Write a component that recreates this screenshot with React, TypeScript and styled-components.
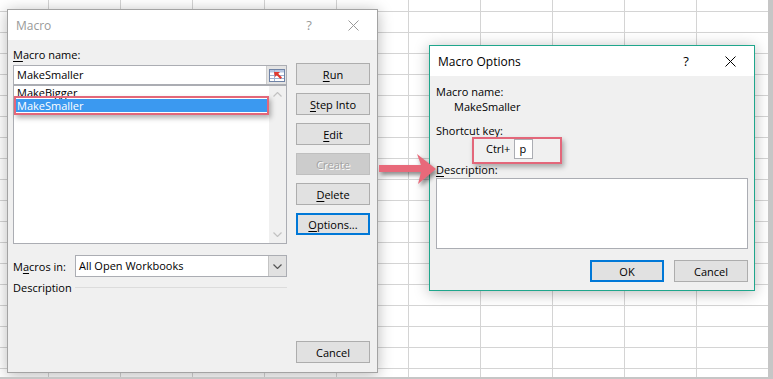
import React from 'react';
import styled, { createGlobalStyle, css } from 'styled-components';

const GlobalStyle = createGlobalStyle`
  html, body {
    margin: 0;
    padding: 0;
    background: #fff;
  }
  body {
    font-family: 'Open Sans', 'Liberation Sans', sans-serif;
    font-size: 11px;
    color: #000;
  }
`;

const Sheet = styled.div`
  position: relative;
  width: 773px;
  height: 379px;
  box-sizing: border-box;
  overflow: hidden;
  border-right: 5px solid #c6c6c6;
  border-bottom: 2px solid #c6c6c6;
  background-color: #fff;
  background-image: linear-gradient(to right, #d4d4d4 1px, transparent 1px),
    linear-gradient(to bottom, #d4d4d4 1px, transparent 1px);
  background-size: 72px 100%, 100% 21px;
  background-position: 48px 0, 0 11px;
`;

const Window = styled.div<{
  $left: number;
  $top: number;
  $width: number;
  $height: number;
  $accent: string;
}>`
  position: absolute;
  left: ${(p) => p.$left}px;
  top: ${(p) => p.$top}px;
  width: ${(p) => p.$width}px;
  height: ${(p) => p.$height}px;
  box-sizing: border-box;
  border: 1px solid ${(p) => p.$accent};
  background: #f0f0f0;
  box-shadow: 0 2px 14px rgba(0, 0, 0, 0.28);
  display: flex;
  flex-direction: column;
`;

const TitleBar = styled.div<{ $active: boolean }>`
  height: 30px;
  flex: none;
  background: #fff;
  display: flex;
  align-items: center;
  padding: 0 16px 0 8px;
  color: ${(p) => (p.$active ? '#000' : '#999')};
`;

const TitleText = styled.span`
  flex: 1;
  font-size: 12px;
`;

const HelpGlyph = styled.span`
  width: 14px;
  margin-right: 29px;
  text-align: center;
  font-size: 13px;
`;

const CloseBox = styled.span`
  width: 16px;
  display: flex;
  justify-content: center;
`;

const U = styled.span`
  text-decoration: underline;
  text-underline-offset: 2px;
`;

const Label = styled.div<{ $indent?: number; $gap?: number }>`
  line-height: 15px;
  white-space: nowrap;
  margin-left: ${(p) => p.$indent ?? 0}px;
  margin-top: ${(p) => p.$gap ?? 0}px;
`;

/* left dialog */

const MacroBody = styled.div`
  flex: 1;
  display: flex;
  gap: 9px;
  padding: 7px 7px 9px 5px;
`;

const LeftColumn = styled.div`
  width: 274px;
  display: flex;
  flex-direction: column;
`;

const ButtonColumn = styled.div`
  width: 74px;
  display: flex;
  flex-direction: column;
  gap: 8px;
  padding-top: 16px;
`;

const NameInput = styled.div`
  margin-top: 3px;
  height: 20px;
  box-sizing: border-box;
  border: 1px solid #abadb3;
  background: #fff;
  display: flex;
`;

const InputText = styled.span`
  flex: 1;
  padding-left: 3px;
  line-height: 18px;
`;

const RefButton = styled.span`
  width: 19px;
  background: #e3e3e3;
  border-left: 1px solid #cdcdcd;
  display: flex;
  align-items: center;
  justify-content: center;
`;

const ListBox = styled.div`
  height: 159px;
  box-sizing: border-box;
  border: 1px solid #abadb3;
  background: #fff;
  display: flex;
`;

const ListItems = styled.div`
  flex: 1;
  padding: 0 1px;
`;

const ListRow = styled.div<{ $selected?: boolean }>`
  position: relative;
  height: 13px;
  line-height: 13px;
  padding-left: 2px;
  ${(p) =>
    p.$selected &&
    css`
      background: #3b99f0;
      color: #fff;
      &::after {
        content: '';
        position: absolute;
        top: -3px;
        bottom: -3px;
        left: -1px;
        right: -1px;
        border: 2px solid #e3677a;
        box-shadow: 2px 3px 5px rgba(0, 0, 0, 0.3);
      }
    `}
`;

const ScrollBar = styled.div`
  width: 17px;
  background: #f0f0f0;
  display: flex;
  flex-direction: column;
  justify-content: space-between;
`;

const ScrollArrow = styled.span`
  height: 17px;
  display: flex;
  align-items: center;
  justify-content: center;
`;

const MacrosInRow = styled.div`
  margin-top: 11px;
  height: 22px;
  display: flex;
  align-items: center;
`;

const MacrosInLabel = styled.span`
  width: 62px;
`;

const Select = styled.div`
  flex: 1;
  height: 22px;
  box-sizing: border-box;
  border: 1px solid #abadb3;
  background: #fff;
  display: flex;
`;

const SelectText = styled.span`
  flex: 1;
  padding-left: 3px;
  line-height: 20px;
`;

const DropButton = styled.span`
  width: 17px;
  background: #e1e1e1;
  border-left: 1px solid #c4c4c4;
  display: flex;
  align-items: center;
  justify-content: center;
`;

const DescriptionRow = styled.div`
  margin-top: 3px;
  display: flex;
  align-items: center;
  gap: 3px;
  line-height: 15px;
`;

const Rule = styled.span`
  flex: 1;
  height: 1px;
  background: #dcdcdc;
`;

const DialogButton = styled.div<{ $default?: boolean; $disabled?: boolean }>`
  width: 74px;
  height: 22px;
  flex: none;
  box-sizing: border-box;
  border: 1px solid #adadad;
  background: #e1e1e1;
  display: flex;
  align-items: center;
  justify-content: center;
  ${(p) =>
    p.$default &&
    css`
      border: 2px solid #0078d7;
    `}
  ${(p) =>
    p.$disabled &&
    css`
      background: #cccccc;
      border-color: #bfbfbf;
      color: #a3a3a3;
      text-shadow: 1px 1px 0 #fff;
    `}
`;

const BottomButton = styled(DialogButton)`
  margin-top: auto;
`;

/* right dialog */

const OptionsBody = styled.div`
  flex: 1;
  display: flex;
  flex-direction: column;
  padding: 8px 6px 8px 6px;
`;

const ShortcutBox = styled.div`
  align-self: flex-start;
  margin: -1px 0 0 36px;
  width: 90px;
  height: 27px;
  box-sizing: border-box;
  border: 2px solid #e3677a;
  box-shadow: 2px 3px 5px rgba(0, 0, 0, 0.3);
  display: flex;
  align-items: flex-start;
  gap: 4px;
  padding-left: 12px;
`;

const CtrlText = styled.span`
  line-height: 20px;
`;

const KeyInput = styled.span`
  width: 19px;
  height: 20px;
  box-sizing: border-box;
  border: 1px solid #abadb3;
  background: #fff;
  padding-left: 4px;
  line-height: 17px;
`;

const TextArea = styled.div`
  margin-top: 1px;
  height: 71px;
  box-sizing: border-box;
  border: 1px solid #abadb3;
  background: #fff;
`;

const ButtonRow = styled.div`
  margin-top: 11px;
  display: flex;
  justify-content: flex-end;
  gap: 10px;
`;

const Arrow = styled.svg`
  position: absolute;
  left: 370px;
  top: 148px;
  filter: drop-shadow(2px 3px 2px rgba(0, 0, 0, 0.45));
`;

const CloseIcon = () => (
  <svg width="11" height="11" viewBox="0 0 11 11">
    <path d="M0.5 0.5 L10.5 10.5 M10.5 0.5 L0.5 10.5" stroke="currentColor" strokeWidth="1" />
  </svg>
);

const RefEditIcon = () => (
  <svg width="16" height="13" viewBox="0 0 16 13">
    <rect x="0.5" y="0.5" width="15" height="12" fill="#fff" stroke="#6f83a6" />
    <rect x="1" y="1" width="14" height="2.5" fill="#b9c8e2" />
    <path d="M1 6.5 H15 M1 9.5 H15 M5.5 1 V12" stroke="#9fb0cf" strokeWidth="1" />
    <path d="M5 3 L11 3 L9.3 4.7 L13 8.4 L11.4 10 L7.7 6.3 L6 8 Z" fill="#e23a2e" />
  </svg>
);

const Chevron = ({ up, color }: { up?: boolean; color: string }) => (
  <svg width="9" height="5" viewBox="0 0 9 5">
    <path
      d={up ? 'M0.5 4.5 L4.5 0.5 L8.5 4.5' : 'M0.5 0.5 L4.5 4.5 L8.5 0.5'}
      stroke={color}
      strokeWidth="1.2"
      fill="none"
    />
  </svg>
);

const App: React.FC = () => {
  return (
    <>
      <GlobalStyle />
      <Sheet>
        <Window $left={7} $top={9} $width={371} $height={364} $accent="#a3a3a3">
          <TitleBar $active={false}>
            <TitleText>Macro</TitleText>
            <HelpGlyph>?</HelpGlyph>
            <CloseBox>
              <CloseIcon />
            </CloseBox>
          </TitleBar>
          <MacroBody>
            <LeftColumn>
              <Label>
                <U>M</U>acro name:
              </Label>
              <NameInput>
                <InputText>MakeSmaller</InputText>
                <RefButton>
                  <RefEditIcon />
                </RefButton>
              </NameInput>
              <ListBox>
                <ListItems>
                  <ListRow>MakeBigger</ListRow>
                  <ListRow $selected>MakeSmaller</ListRow>
                </ListItems>
                <ScrollBar>
                  <ScrollArrow>
                    <Chevron up color="#c2c2c2" />
                  </ScrollArrow>
                  <ScrollArrow>
                    <Chevron color="#c2c2c2" />
                  </ScrollArrow>
                </ScrollBar>
              </ListBox>
              <MacrosInRow>
                <MacrosInLabel>
                  M<U>a</U>cros in:
                </MacrosInLabel>
                <Select>
                  <SelectText>All Open Workbooks</SelectText>
                  <DropButton>
                    <Chevron color="#555" />
                  </DropButton>
                </Select>
              </MacrosInRow>
              <DescriptionRow>
                <span>Description</span>
                <Rule />
              </DescriptionRow>
            </LeftColumn>
            <ButtonColumn>
              <DialogButton>
                <U>R</U>un
              </DialogButton>
              <DialogButton>
                <U>S</U>tep Into
              </DialogButton>
              <DialogButton>
                <U>E</U>dit
              </DialogButton>
              <DialogButton $disabled>Create</DialogButton>
              <DialogButton>
                <U>D</U>elete
              </DialogButton>
              <DialogButton $default>
                <U>O</U>ptions...
              </DialogButton>
              <BottomButton>Cancel</BottomButton>
            </ButtonColumn>
          </MacroBody>
        </Window>

        <Window $left={429} $top={45} $width={326} $height={246} $accent="#1fa68c">
          <TitleBar $active>
            <TitleText>Macro Options</TitleText>
            <HelpGlyph>?</HelpGlyph>
            <CloseBox>
              <CloseIcon />
            </CloseBox>
          </TitleBar>
          <OptionsBody>
            <Label>Macro name:</Label>
            <Label $indent={18}>MakeSmaller</Label>
            <Label $gap={9}>
              Shortcut <U>k</U>ey:
            </Label>
            <ShortcutBox>
              <CtrlText>Ctrl+</CtrlText>
              <KeyInput>p</KeyInput>
            </ShortcutBox>
            <Label $gap={-2}>
              <U>D</U>escription:
            </Label>
            <TextArea />
            <ButtonRow>
              <DialogButton $default>OK</DialogButton>
              <DialogButton>Cancel</DialogButton>
            </ButtonRow>
          </OptionsBody>
        </Window>

        <Arrow width="72" height="44" viewBox="0 0 72 44">
          <polygon
            points="9,17 51,17 47,6 66,21 48,36 51,24 9,24"
            fill="#e8697a"
          />
        </Arrow>
      </Sheet>
    </>
  );
};

export default App;
